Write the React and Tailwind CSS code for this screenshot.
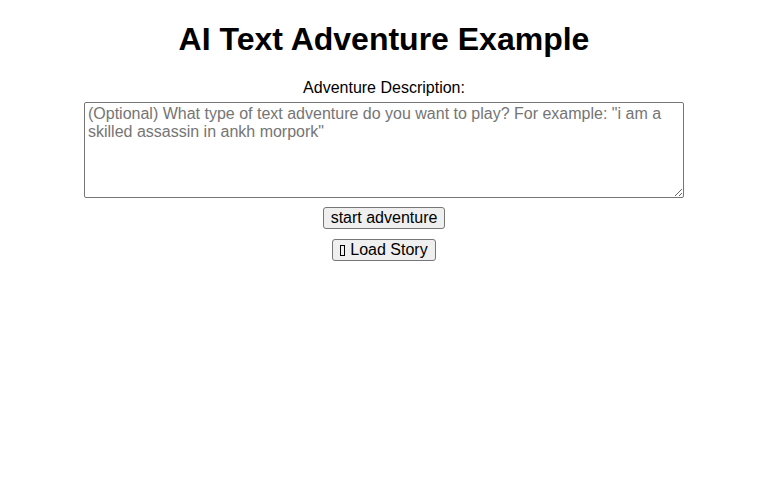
import React, { useState } from "react"

// Simple start screen: title, description box and two buttons
export default function App() {
    const [desc, setDesc] = useState("")

    return (
        <div className="min-h-screen bg-white text-black font-['Liberation_Sans',Arial,sans-serif]">
            <div className="flex flex-col items-center">
                <h1 className="mt-[21px] text-[32px] leading-[37px] font-bold">
                    AI Text Adventure Example
                </h1>

                <label htmlFor="desc" className="mt-[21px] text-base leading-[18px]">
                    Adventure Description:
                </label>
                <textarea
                    id="desc"
                    value={desc}
                    onChange={(e) => setDesc(e.target.value)}
                    placeholder={'(Optional) What type of text adventure do you want to play? For example: "i am a skilled assassin in ankh morpork"'}
                    className="mt-[5px] w-[600px] h-[96px] border border-[#767676] rounded-[2px] pl-[3px] pr-[2px] py-[2px] text-base leading-[18px] placeholder:text-[#757575] outline-none"
                />

                <button className="mt-[9px] h-[22px] px-[7px] bg-[#efefef] border border-[#767676] rounded-[3px] text-base leading-[18px]">
                    start adventure
                </button>
                <button className="mt-[10px] h-[22px] px-[7px] bg-[#efefef] border border-[#767676] rounded-[3px] text-base leading-[18px] flex items-center">
                    {/* folder emoji has no glyph here, drawn as an empty box */}
                    <span className="inline-block w-[5px] h-[11px] border border-black mr-[5px]" />
                    Load Story
                </button>
            </div>
        </div>
    )
}
